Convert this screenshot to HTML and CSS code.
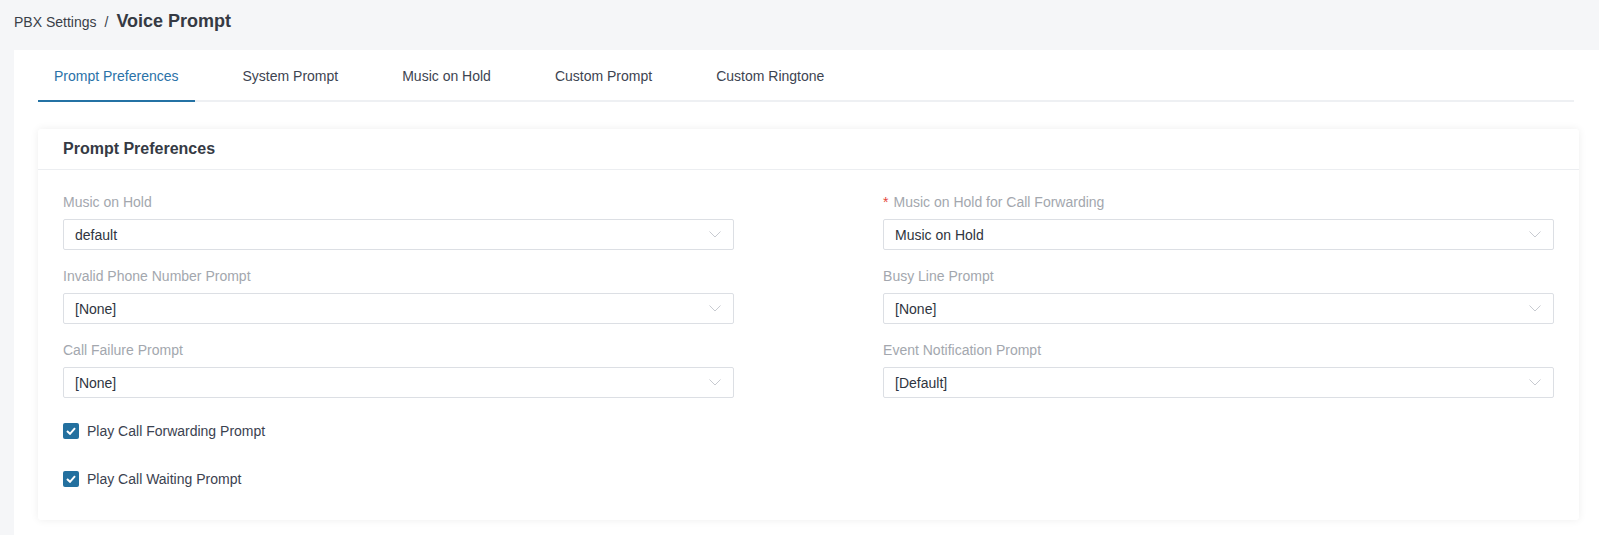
FILE: index.html
```html
<html>
<head>
<meta charset="utf-8"/>
<link rel="stylesheet" href="styles.css">
</head>
<body>

<div class="crumbs">
  <span class="crumb">PBX Settings</span>
  <span class="sep">/</span>
  <span class="current">Voice Prompt</span>
</div>

<div class="panel">
  <div class="tabs">
    <div class="tab active">Prompt Preferences</div>
    <div class="tab">System Prompt</div>
    <div class="tab">Music on Hold</div>
    <div class="tab">Custom Prompt</div>
    <div class="tab">Custom Ringtone</div>
  </div>

  <div class="card">
    <div class="card-head">Prompt Preferences</div>
    <div class="card-body">
      <div class="grid">
        <div class="field">
          <div class="label">Music on Hold</div>
          <div class="select"><span>default</span><svg class="arrow" width="12" height="7" viewBox="0 0 12 7"><path d="M0.5 0.5 L6 6 L11.5 0.5" fill="none" stroke="#c8cbd1" stroke-width="1"/></svg></div>
        </div>
        <div class="field">
          <div class="label"><span class="req">*</span>Music on Hold for Call Forwarding</div>
          <div class="select"><span>Music on Hold</span><svg class="arrow" width="12" height="7" viewBox="0 0 12 7"><path d="M0.5 0.5 L6 6 L11.5 0.5" fill="none" stroke="#c8cbd1" stroke-width="1"/></svg></div>
        </div>
        <div class="field">
          <div class="label">Invalid Phone Number Prompt</div>
          <div class="select"><span>[None]</span><svg class="arrow" width="12" height="7" viewBox="0 0 12 7"><path d="M0.5 0.5 L6 6 L11.5 0.5" fill="none" stroke="#c8cbd1" stroke-width="1"/></svg></div>
        </div>
        <div class="field">
          <div class="label">Busy Line Prompt</div>
          <div class="select"><span>[None]</span><svg class="arrow" width="12" height="7" viewBox="0 0 12 7"><path d="M0.5 0.5 L6 6 L11.5 0.5" fill="none" stroke="#c8cbd1" stroke-width="1"/></svg></div>
        </div>
        <div class="field">
          <div class="label">Call Failure Prompt</div>
          <div class="select"><span>[None]</span><svg class="arrow" width="12" height="7" viewBox="0 0 12 7"><path d="M0.5 0.5 L6 6 L11.5 0.5" fill="none" stroke="#c8cbd1" stroke-width="1"/></svg></div>
        </div>
        <div class="field">
          <div class="label">Event Notification Prompt</div>
          <div class="select"><span>[Default]</span><svg class="arrow" width="12" height="7" viewBox="0 0 12 7"><path d="M0.5 0.5 L6 6 L11.5 0.5" fill="none" stroke="#c8cbd1" stroke-width="1"/></svg></div>
        </div>
      </div>

      <div class="check first">
        <span class="box"><svg width="10" height="8" viewBox="0 0 10 8"><path d="M1 4 L4 6.8 L9 1.2" fill="none" stroke="#fff" stroke-width="2"/></svg></span>
        Play Call Forwarding Prompt
      </div>
      <div class="check">
        <span class="box"><svg width="10" height="8" viewBox="0 0 10 8"><path d="M1 4 L4 6.8 L9 1.2" fill="none" stroke="#fff" stroke-width="2"/></svg></span>
        Play Call Waiting Prompt
      </div>
    </div>
  </div>
</div>

</body>
</html>
```

FILE: styles.css
```css
/* page */
body
	{margin:0;
	background-color:#f5f6f8;
	font-family:"Liberation Sans", Arial, sans-serif;
	font-size:14px;
	color:#3b4250;}

.crumbs
	{height:50px;
	box-sizing:border-box;
	padding:11px 0 0 14px;
	display:flex;
	align-items:baseline;}
.crumb
	{font-size:14px;
	color:#3a3f48;}
.sep
	{margin:0 8px;
	color:#3a3f48;
	font-size:14px;}
.current
	{font-size:18px;
	font-weight:bold;
	color:#353a44;}

/* white panel */
.panel
	{margin-left:14px;
	background-color:#fff;
	padding:0 20px 20px 24px;
	min-height:485px;
	box-sizing:border-box;}

.tabs
	{display:flex;
	height:52px;
	padding-top:2px;
	box-sizing:border-box;
	border-bottom:2px solid #eef0f3;
	margin-right:5px;}
.tab
	{padding:0 16px;
	margin-right:32px;
	line-height:48px;
	font-size:14px;
	color:#3d4451;
	margin-bottom:-2px;}
.tab.active
	{color:#2a72a8;
	border-bottom:2px solid #2472a4;}

/* card */
.card
	{margin-top:27px;
	background-color:#fff;
	border-radius:3px;
	box-shadow:0 0 8px rgba(0,0,0,0.07);}
.card-head
	{height:40px;
	line-height:40px;
	padding-left:25px;
	font-size:16px;
	font-weight:bold;
	color:#353a44;
	border-bottom:1px solid #eceef1;}
.card-body
	{padding:22px 25px 31px 25px;}

.grid
	{display:grid;
	grid-template-columns:45% 45%;
	justify-content:space-between;
	row-gap:16px;}
.label
	{line-height:20px;
	height:20px;
	margin-bottom:7px;
	color:#a3a7ae;
	font-size:14px;}
.req
	{color:#e5483b;
	margin-right:5px;}
.select
	{height:31px;
	box-sizing:border-box;
	border:1px solid #dcdfe4;
	border-radius:2px;
	padding:0 12px 0 11px;
	display:flex;
	align-items:center;
	justify-content:space-between;
	color:#2f3540;
	font-size:14px;}
.arrow
	{margin-right:0;}

/* checkboxes */
.check
	{display:flex;
	align-items:center;
	line-height:20px;
	color:#3b4250;
	font-size:14px;
	margin-top:28px;}
.check.first
	{margin-top:23px;}
.box
	{width:16px;
	height:16px;
	border-radius:2px;
	background-color:#23709f;
	display:flex;
	align-items:center;
	justify-content:center;
	margin-right:8px;}
```
